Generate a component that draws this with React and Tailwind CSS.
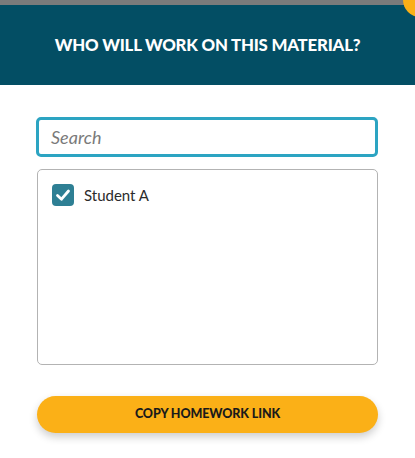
import React from "react";

export default function App() {
  return (
    <div className="relative w-[415px] h-[458px] overflow-hidden bg-white" style={{ fontFamily: "Lato, 'Open Sans', sans-serif" }}>
      <div className="h-[5px] bg-[#7b7b7b]" />
      <div className="h-[80px] bg-[#034e64] flex items-center justify-center">
        <h1 className="text-white font-black text-[16.8px] tracking-[-0.2px] pb-[1px]">WHO WILL WORK ON THIS MATERIAL?</h1>
      </div>
      <div className="px-[37px] pt-[32px] flex flex-col">
        <div className="-ml-px h-[40px] rounded-[5px] border-[3px] border-[#2ca4c2] flex items-center pl-[12px]">
          <span className="italic text-[18px] text-[#7a7a7a]">Search</span>
        </div>
        <div className="mt-[12px] h-[196px] rounded-[5px] border border-[#b3b3b3] pt-[14px] pl-[14px]">
          <div className="flex items-center gap-[10px]">
            <div className="w-[22px] h-[22px] rounded-[4px] bg-[#2e7f94] flex items-center justify-center">
              <svg width="18" height="18" viewBox="0 0 18 18" fill="none">
                <path d="M3.5 9.5 L7.5 13.2 L14.5 5" stroke="white" strokeWidth="2.8" strokeLinecap="round" strokeLinejoin="round" />
              </svg>
            </div>
            <span className="text-[15px] text-[#2b2b2b]">Student A</span>
          </div>
        </div>
        <button className="mt-[31px] h-[37px] rounded-full bg-[#fbb017] shadow-[0_4px_8px_rgba(0,0,0,0.2)] flex items-center justify-center">
          <span className="font-black text-[12.5px] text-[#1a1a1a] tracking-[-0.1px]">COPY HOMEWORK LINK</span>
        </button>
      </div>
      <div className="absolute right-[-22px] top-[-17px] w-[34px] h-[34px] rounded-full bg-[#fbb017]" />
    </div>
  );
}
